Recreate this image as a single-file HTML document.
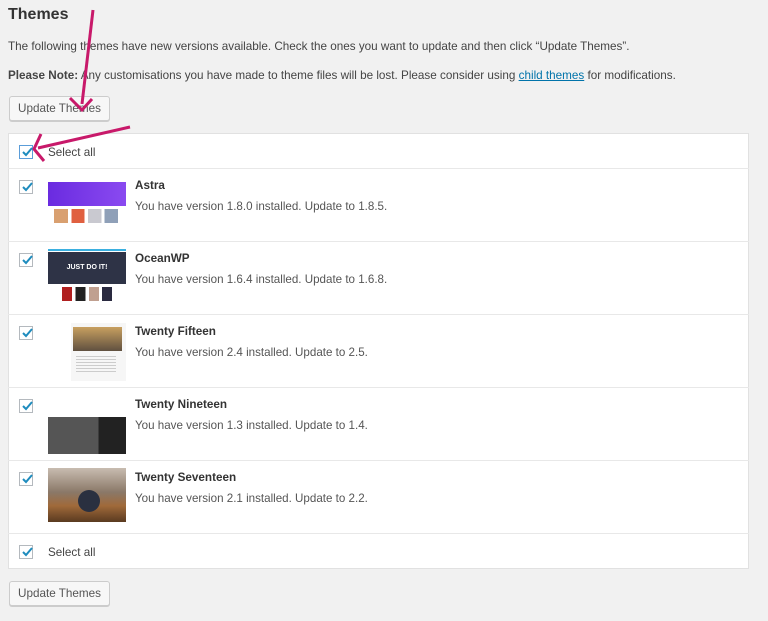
<!DOCTYPE html>
<html><head><meta charset="utf-8"><style>
body{margin:0;width:768px;height:621px;background:#f1f1f1;font-family:"Liberation Sans",sans-serif;color:#444;font-size:11.7px;position:relative;overflow:hidden}
.a{position:absolute;white-space:nowrap}
.btn{position:absolute;left:9px;width:101px;height:25px;border:1px solid #ccc;background:#f7f7f7;border-radius:3px;box-shadow:0 1px 0 #ccc;color:#555;font-size:11.7px;line-height:24px;text-align:center;box-sizing:border-box}
.tbl{position:absolute;left:8px;top:133px;width:741px;height:436px;background:#fff;border:1px solid #e1e1e1;box-sizing:border-box}
.hr{position:absolute;left:8px;width:741px;height:1px;background:#e8e8e8}
.cb{position:absolute;left:19px;width:14px;height:14px;border:1px solid #b4b9be;background:#fff;box-sizing:border-box}
.cb svg{position:absolute;left:0;top:-1px}
.t{position:absolute;left:135px;font-weight:bold;color:#333;font-size:11.7px}
.v{position:absolute;left:135px;color:#555;font-size:11.6px}
.th{position:absolute;left:48px;width:78px;height:58px}
</style></head><body>
<div class="a" style="left:8px;top:6px;font-size:16px;font-weight:bold;color:#333">Themes</div>
<div class="a" style="left:8px;top:40px">The following themes have new versions available. Check the ones you want to update and then click “Update Themes”.</div>
<div class="a" style="left:8px;top:69px"><b>Please Note:</b> Any customisations you have made to theme files will be lost. Please consider using <span style="color:#0073aa;text-decoration:underline">child themes</span> for modifications.</div>
<div class="btn" style="top:96px">Update Themes</div>
<div class="tbl"></div>
<div class="hr" style="top:168px"></div><div class="hr" style="top:241px"></div><div class="hr" style="top:314px"></div><div class="hr" style="top:387px"></div><div class="hr" style="top:460px"></div><div class="hr" style="top:533px"></div>

<div class="cb" style="top:145px;border-color:#5b9dd9"><svg width="14" height="14"><path d="M3 7l3 3 6-7" stroke="#1e8cbe" stroke-width="2" fill="none"/></svg></div>
<div class="a" style="left:48px;top:146px">Select all</div>

<div class="cb" style="top:180px"><svg width="14" height="14"><path d="M3 7l3 3 6-7" stroke="#1e8cbe" stroke-width="2" fill="none"/></svg></div>
<div class="th" style="top:178px;background:#fff"><div style="position:absolute;left:0;top:4px;width:78px;height:24px;background:linear-gradient(90deg,#6a2be0,#8a4af0)"></div><div style="position:absolute;left:6px;top:31px;width:64px;height:14px;background:linear-gradient(90deg,#d9a070 0 22%,#fff 22% 27%,#e06040 27% 48%,#fff 48% 53%,#c9c9d0 53% 74%,#fff 74% 79%,#8fa0b8 79%)"></div></div>
<div class="t" style="top:179px">Astra</div><div class="v" style="top:200px">You have version 1.8.0 installed. Update to 1.8.5.</div>

<div class="cb" style="top:253px"><svg width="14" height="14"><path d="M3 7l3 3 6-7" stroke="#1e8cbe" stroke-width="2" fill="none"/></svg></div>
<div class="th" style="top:249px;background:#fff"><div style="position:absolute;left:0;top:0;width:78px;height:2px;background:#3bb0e0"></div><div style="position:absolute;left:0;top:3px;width:78px;height:32px;background:#2e3346;color:#fff;font-size:7px;font-weight:bold;text-align:center;line-height:32px">JUST DO IT!</div><div style="position:absolute;left:14px;top:38px;width:50px;height:14px;background:linear-gradient(90deg,#b02020 0 20%,#fff 20% 27%,#222 27% 47%,#fff 47% 54%,#c0a090 54% 74%,#fff 74% 80%,#2a2a40 80%)"></div></div>
<div class="t" style="top:252px">OceanWP</div><div class="v" style="top:273px">You have version 1.6.4 installed. Update to 1.6.8.</div>

<div class="cb" style="top:326px"><svg width="14" height="14"><path d="M3 7l3 3 6-7" stroke="#1e8cbe" stroke-width="2" fill="none"/></svg></div>
<div class="th" style="top:323px;background:#fff"><div style="position:absolute;left:23px;top:0;width:55px;height:58px;background:#f6f6f6"></div><div style="position:absolute;left:25px;top:4px;width:49px;height:24px;background:linear-gradient(180deg,#c8a060,#605040)"></div><div style="position:absolute;left:28px;top:33px;width:40px;height:18px;background:repeating-linear-gradient(180deg,#ccc 0 1px,transparent 1px 3px)"></div></div>
<div class="t" style="top:325px">Twenty Fifteen</div><div class="v" style="top:346px">You have version 2.4 installed. Update to 2.5.</div>

<div class="cb" style="top:399px"><svg width="14" height="14"><path d="M3 7l3 3 6-7" stroke="#1e8cbe" stroke-width="2" fill="none"/></svg></div>
<div class="th" style="top:396px;background:#fff"><div style="position:absolute;left:0;top:21px;width:78px;height:37px;background:linear-gradient(90deg,#555 0 65%,#222 65%)"></div></div>
<div class="t" style="top:398px">Twenty Nineteen</div><div class="v" style="top:419px">You have version 1.3 installed. Update to 1.4.</div>

<div class="cb" style="top:472px"><svg width="14" height="14"><path d="M3 7l3 3 6-7" stroke="#1e8cbe" stroke-width="2" fill="none"/></svg></div>
<div class="th" style="top:468px;height:54px;background:linear-gradient(180deg,#c8bcb0 0%,#8a7868 45%,#a06a3a 70%,#5a3a20 100%)"><div style="position:absolute;left:30px;top:22px;width:22px;height:22px;border-radius:50%;background:#2a3040"></div></div>
<div class="t" style="top:471px">Twenty Seventeen</div><div class="v" style="top:492px">You have version 2.1 installed. Update to 2.2.</div>

<div class="cb" style="top:545px"><svg width="14" height="14"><path d="M3 7l3 3 6-7" stroke="#1e8cbe" stroke-width="2" fill="none"/></svg></div>
<div class="a" style="left:48px;top:546px">Select all</div>
<div class="btn" style="top:581px">Update Themes</div>

<svg style="position:absolute;left:0;top:0" width="768" height="621">
<path d="M93 10 L82 104" stroke="#c8196a" stroke-width="3" fill="none"/>
<path d="M70 98 L82 110 L92 99" stroke="#c8196a" stroke-width="3" fill="none"/>
<path d="M130 127 L38 148" stroke="#c8196a" stroke-width="3" fill="none"/>
<path d="M41 134 L34 149 L44 161" stroke="#c8196a" stroke-width="3" fill="none"/>
</svg>
</body></html>
